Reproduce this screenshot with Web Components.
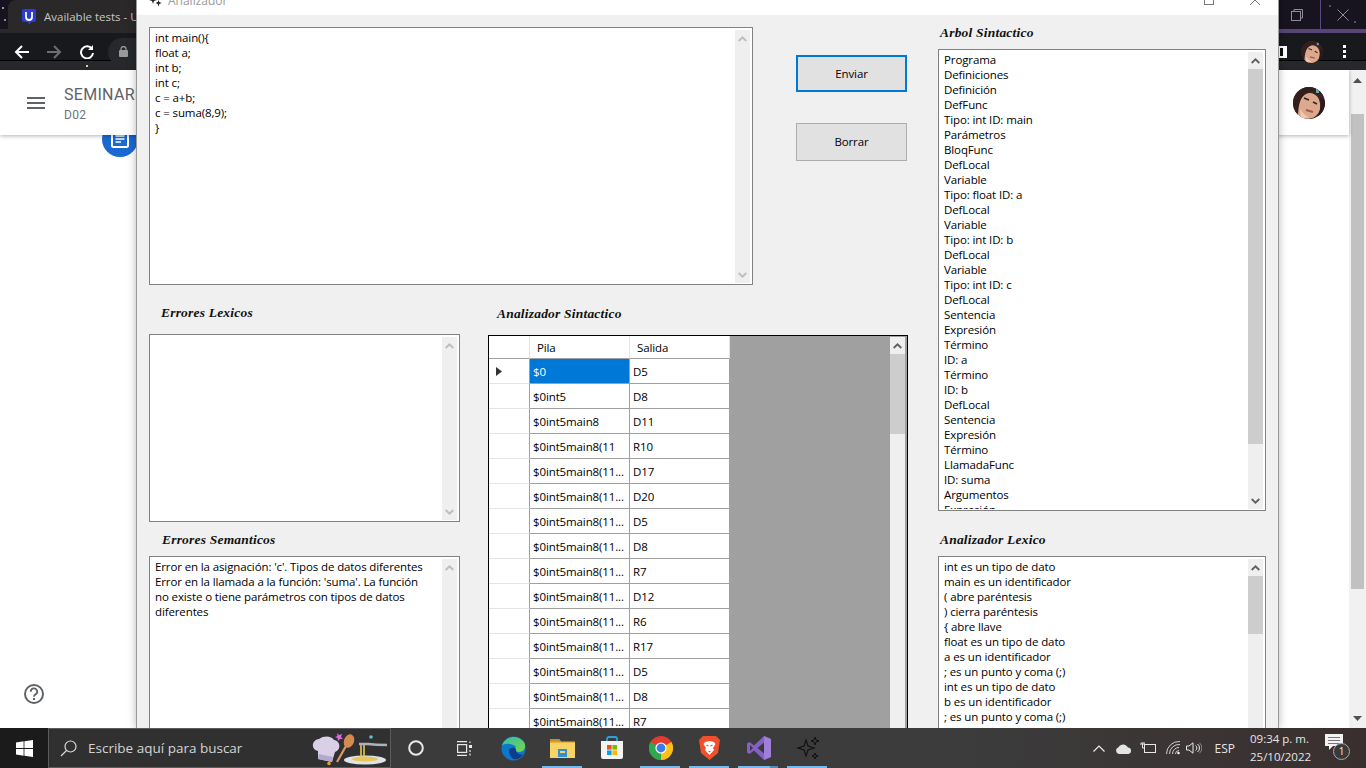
<!DOCTYPE html>
<html lang="es">
<head>
<meta charset="utf-8">
<title>Analizador</title>
<style>
  html, body { margin: 0; height: 100%; overflow: hidden; background: #fff; }
  body { font-family: "Open Sans", "Noto Sans", sans-serif; }
</style>
</head>
<body>
<desktop-screen>
  <browser-window slot="back"></browser-window>
  <form-window slot="front" caption="Analizador">
    <analizador-form></analizador-form>
  </form-window>
  <win-taskbar slot="bar"></win-taskbar>
</desktop-screen>

<script>
const UI_FONT = '"Open Sans", "Noto Sans", sans-serif';

class DesktopScreen extends HTMLElement {
  constructor() {
    super();
    this.attachShadow({ mode: 'open' });
    this.shadowRoot.innerHTML = `
      <style>
        :host { display: flex; flex-direction: column; width: 1366px; height: 768px; overflow: hidden; }
        .desk { position: relative; height: 728px; overflow: hidden; }
        ::slotted([slot=back]) { height: 728px; }
        ::slotted([slot=front]) { position: absolute; left: 137px; top: -15px; width: 1141px; height: 743px; }
        ::slotted([slot=bar]) { height: 40px; }
      </style>
      <div class="desk"><slot name="back"></slot><slot name="front"></slot></div>
      <slot name="bar"></slot>`;
  }
}

class BrowserWindow extends HTMLElement {
  constructor() {
    super();
    this.attachShadow({ mode: 'open' });
    const avatar = (id, size) => `
      <svg width="${size}" height="${size}" viewBox="0 0 32 32" style="display:block">
        <defs><clipPath id="${id}"><circle cx="16" cy="16" r="16"/></clipPath></defs>
        <g clip-path="url(#${id})">
          <rect width="32" height="32" fill="#3a2320"/>
          <path d="M4 32 C3 22 6 8 16 6 C25 6 28 14 27 22 C26 28 20 32 14 32 Z" fill="#dca88e"/>
          <path d="M0 0 H32 V11 C28 6 22 3 15 5 C8 8 5 16 5 32 H0 Z" fill="#33201c"/>
          <path d="M27 10 L32 14 V32 H23 C27 26 29 18 27 10 Z" fill="#2c1a18"/>
          <path d="M11 11 L16 13 M20 15 L24 17" stroke="#3a2320" stroke-width="1.6"/>
          <path d="M13 23 L20 25" stroke="#a8554f" stroke-width="2"/>
          <path d="M7 22 C10 26 12 29 16 30 L8 32 Z" fill="#f0c9b2"/>
          <rect x="23" y="2" width="3" height="4" fill="#6aa7a8"/>
        </g>
      </svg>`;
    this.shadowRoot.innerHTML = `
      <style>
        :host { display: flex; flex-direction: column; background: #fff; font-family: ${UI_FONT}; isolation: isolate; }
        .tabs { height: 29px; display: flex; background:
            radial-gradient(1px 1px at 3px 8px, #9a93b8 99%, transparent),
            radial-gradient(1px 1px at 5px 20px, #8a86a0 99%, transparent),
            radial-gradient(1px 1px at 1330px 6px, #55506a 99%, transparent),
            radial-gradient(1px 1px at 1355px 22px, #55506a 99%, transparent),
            #17131f; }
        .tab { margin-left: 8px; width: 129px; flex: none; background: #2a2829; border-radius: 8px 0 0 0; display: flex; align-items: center; padding-left: 14px; box-sizing: border-box; gap: 8px; color: #c6c6c6; font-size: 11.5px; height: 33px; white-space: nowrap; overflow: hidden; }
        .tab svg { flex: none; }
        .caps { margin-left: auto; display: flex; align-items: center; width: 92px; height: 29px; }
        .caps svg { display: block; }
        .caps .a { width: 46px; display: flex; justify-content: center; }
        .caps .b { width: 46px; display: flex; justify-content: center; border-left: 1px solid #5b4a80; height: 29px; align-items: center; }
        .band { height: 4px; background: linear-gradient(90deg, #2a2829 0, #2a2829 40%, #57457a 90%); }
        .tools { height: 37px; background:
            radial-gradient(1.5px 1.5px at 87px 33px, #d8d0a8 99%, transparent),
            linear-gradient(#17191d 0, #17191d 27px, #000 27px, #000 28px, #26282b 28px);
          display: flex; align-items: center; }
        .tools .nav { display: flex; align-items: center; gap: 18px; margin-left: 14px; }
        .omni { margin-left: 14px; height: 28px; width: 1000px; background: #26282b; border-radius: 14px 0 0 14px; display: flex; align-items: center; padding-left: 11px; box-sizing: border-box; }
        .end { margin-left: auto; display: flex; align-items: center; gap: 20px; margin-right: 20px; }
        .dots { display: flex; flex-direction: column; gap: 2px; }
        .dots i { width: 3px; height: 3px; background: #fff; display: block; }
        .main { flex: 1; display: flex; min-height: 0; }
        .page { flex: 1; display: flex; flex-direction: column; position: relative; min-width: 0; }
        .appbar { height: 65px; background: #fff; box-shadow: 0 1px 4px rgba(0,0,0,.3); display: flex; align-items: center; position: relative; z-index: 2; }
        .burger { margin-left: 27px; width: 18px; display: flex; flex-direction: column; gap: 3px; }
        .burger i { display: block; height: 2px; background: #5f6368; }
        .titles { margin-left: 19px; padding-top: 3px; font-family: Roboto, sans-serif; color: #5f6368; }
        .titles b { display: block; font-weight: 400; font-size: 16px; line-height: 20px; letter-spacing: .3px; }
        .titles span { display: block; font-size: 12px; line-height: 16px; margin-top: 2px; letter-spacing: .3px; color: #6f7377; }
        .me { margin-left: auto; margin-right: 24px; height: 32px; }
        .fab { position: absolute; left: 102px; top: 51px; width: 36px; height: 36px; border-radius: 50%; background: #1a68d1; z-index: 1; display: flex; align-items: center; justify-content: center; }
        .body { flex: 1; display: flex; flex-direction: column; justify-content: flex-end; padding: 0 0 24px 24px; }
        .sb { width: 17px; background: #f1f1f1; display: flex; flex-direction: column; align-items: center; }
        .sb .up { height: 44px; display: flex; align-items: center; justify-content: center; flex: none; box-sizing: border-box; padding-bottom: 24px; }
        .sb .thumb { width: 13px; height: 475px; background: #c1c1c1; flex: none; }
        .sb .dn { margin-top: auto; height: 20px; display: flex; align-items: center; justify-content: center; }
      </style>
      <div class="tabs">
        <div class="tab">
          <svg width="14" height="16" viewBox="0 0 14 16"><path d="M2 0 H12 A2 2 0 0 1 14 2 V11 A2 2 0 0 1 12 13 H9 L7 16 L6 13 H2 A2 2 0 0 1 0 11 V2 A2 2 0 0 1 2 0 Z" fill="#2a3bd6"/><path d="M4 3 V8 A3 3 0 0 0 10 8 V3" fill="none" stroke="#fff" stroke-width="1.8"/></svg>
          <span>Available tests - U</span>
        </div>
        <div class="caps">
          <div class="a"><svg width="12" height="12" viewBox="0 0 12 12" fill="none" stroke="#8f8b98"><rect x=".5" y="2.5" width="9" height="9"/><path d="M3 2.5 V.5 H11.5 V9 H9.5"/></svg></div>
          <div class="b"><svg width="12" height="12" viewBox="0 0 12 12" stroke="#8f8b98" stroke-width="1"><path d="M.5 .5 L11.5 11.5 M11.5 .5 L.5 11.5"/></svg></div>
        </div>
      </div>
      <div class="band"></div>
      <div class="tools">
        <div class="nav">
          <svg width="15" height="14" viewBox="0 0 15 14" fill="none" stroke="#fff" stroke-width="2"><path d="M15 7 H2 M8 1 L2 7 L8 13"/></svg>
          <svg width="15" height="14" viewBox="0 0 15 14" fill="none" stroke="#6e6e6e" stroke-width="2"><path d="M0 7 H13 M7 1 L13 7 L7 13"/></svg>
          <svg width="14" height="14" viewBox="0 0 14 14" fill="none" stroke="#fff" stroke-width="2"><path d="M12 4 A6 6 0 1 0 13 8"/><path d="M13 0 V5 H8 Z" fill="#fff" stroke="none"/></svg>
        </div>
        <div class="omni">
          <svg width="9" height="11" viewBox="0 0 9 11"><rect y="4" width="9" height="7" rx="1" fill="#9a9a9a"/><path d="M2 4 V3 A2.5 2.5 0 0 1 7 3 V4" fill="none" stroke="#9a9a9a" stroke-width="1.3"/></svg>
        </div>
        <div class="end">
          <svg width="9" height="12" viewBox="0 0 9 12" style="margin-right:-6px"><rect width="9" height="12" fill="#fff"/><rect x="2" y="2" width="3" height="8" fill="#111"/></svg>
          ${avatar('av1', 22)}
          <div class="dots"><i></i><i></i><i></i></div>
        </div>
      </div>
      <div class="main">
        <div class="page">
          <div class="appbar">
            <div class="burger"><i></i><i></i><i></i></div>
            <div class="titles"><b>SEMINARIO</b><span>D02</span></div>
            <div class="me">${avatar('av2', 32)}</div>
          </div>
          <div class="fab"><svg width="18" height="18" viewBox="0 0 18 18"><rect x="1" y="1" width="16" height="16" rx="1.5" fill="none" stroke="#fff" stroke-width="2"/><path d="M4.5 6 H13.5 M4.5 9 H13.5 M4.5 12 H10" stroke="#fff" stroke-width="1.5"/></svg></div>
          <div class="body">
            <svg width="20" height="20" viewBox="0 0 20 20"><circle cx="10" cy="10" r="9" fill="none" stroke="#5f6368" stroke-width="2"/><path d="M6.8 7.8 A3.2 3.2 0 1 1 11.5 10.4 C10.3 11 10 11.6 10 12.8" fill="none" stroke="#5f6368" stroke-width="1.8"/><rect x="9" y="14" width="2" height="2" fill="#5f6368"/></svg>
          </div>
        </div>
        <div class="sb">
          <div class="up"><svg width="9" height="5" viewBox="0 0 9 5"><path d="M4.5 0 L9 5 H0 Z" fill="#505050"/></svg></div>
          <div class="thumb"></div>
          <div class="dn"><svg width="9" height="5" viewBox="0 0 9 5"><path d="M0 0 H9 L4.5 5 Z" fill="#505050"/></svg></div>
        </div>
      </div>`;
  }
}

class FormWindow extends HTMLElement {
  constructor() {
    super();
    this.attachShadow({ mode: 'open' });
    this.shadowRoot.innerHTML = `
      <style>
        :host { display: flex; flex-direction: column; background: #f0f0f0; box-shadow: 0 0 9px rgba(0,0,0,.35); outline: 1px solid #9a9a9a; font-family: ${UI_FONT}; }
        .title { flex: none; height: 30px; background: #fff; display: flex; align-items: center; color: #9b9b9b; font-size: 12px; padding-left: 12px; gap: 6px; }
        .btns { margin-left: auto; display: flex; }
        .btns div { width: 46px; display: flex; justify-content: center; }
        .client { flex: 1; min-height: 0; overflow: hidden; }
      </style>
      <div class="title">
        <svg width="13" height="13" viewBox="0 0 13 13"><path d="M4 2 L5 5 L8 6 L5 7 L4 10 L3 7 L0 6 L3 5 Z M9.5 6 L10.3 8 L12.5 9 L10.3 10 L9.5 12.5 L8.7 10 L6.5 9 L8.7 8 Z" fill="#222"/></svg>
        <span id="cap"></span>
        <div class="btns">
          <div><svg width="10" height="10" viewBox="0 0 10 10"><rect x=".5" y=".5" width="9" height="9" fill="none" stroke="#777"/></svg></div>
          <div><svg width="10" height="10" viewBox="0 0 10 10"><path d="M0 0 L10 10 M10 0 L0 10" stroke="#777"/></svg></div>
        </div>
      </div>
      <div class="client"><slot></slot></div>`;
    this.shadowRoot.getElementById('cap').textContent = this.getAttribute('caption');
  }
}

class WinScrollbar extends HTMLElement {
  constructor() {
    super();
    this.attachShadow({ mode: 'open' });
    const off = this.hasAttribute('disabled');
    const color = off ? '#bdbdbd' : '#606060';
    const top = this.getAttribute('thumb-top') || 0;
    const h = this.getAttribute('thumb-height') || 0;
    this.shadowRoot.innerHTML = `
      <style>
        :host { display: flex; flex-direction: column; flex: none; width: 15px; background: #efefef; }
        .arrow { flex: none; height: 17px; display: flex; align-items: center; justify-content: center; }
        .track { flex: 1; min-height: 0; }
        .thumb { background: #cdcdcd; }
      </style>
      <div class="arrow"><svg width="9" height="6" viewBox="0 0 9 6"><path d="M.7 5 L4.5 1.3 L8.3 5" fill="none" stroke="${color}" stroke-width="1.8"/></svg></div>
      <div class="track">${off ? '' : `<div class="thumb" style="margin-top:${top}px;height:${h}px"></div>`}</div>
      <div class="arrow"><svg width="9" height="6" viewBox="0 0 9 6"><path d="M.7 1 L4.5 4.7 L8.3 1" fill="none" stroke="${color}" stroke-width="1.8"/></svg></div>`;
  }
}

class TextBox extends HTMLElement {
  constructor() {
    super();
    this.attachShadow({ mode: 'open' });
    const bar = this.hasAttribute('thumb-height')
      ? `<win-scrollbar thumb-top="${this.getAttribute('thumb-top')}" thumb-height="${this.getAttribute('thumb-height')}"></win-scrollbar>`
      : `<win-scrollbar disabled></win-scrollbar>`;
    this.shadowRoot.innerHTML = `
      <style>
        :host { display: flex; box-sizing: border-box; background: #fff; border: 1px solid #828282; padding: 2px 2px 1px 0; font-family: ${UI_FONT}; font-size: 11.5px; letter-spacing: -.12px; line-height: 15px; color: #000; }
        .text { flex: 1; min-width: 0; padding-left: 5px; overflow: hidden; white-space: pre-wrap; }
      </style>
      <div class="text"><slot></slot></div>${bar}`;
  }
}

class FormButton extends HTMLElement {
  constructor() {
    super();
    this.attachShadow({ mode: 'open' });
    this.shadowRoot.innerHTML = `
      <style>
        :host { display: flex; align-items: center; justify-content: center; box-sizing: border-box; width: 111px; padding-bottom: 2px; background: #e1e1e1; border: 1px solid #adadad; font-family: ${UI_FONT}; font-size: 11.5px; letter-spacing: -.12px; color: #000; }
        :host([focused]) { border: 2px solid #0078d7; padding-bottom: 0; }
      </style><slot></slot>`;
  }
}

class FormLabel extends HTMLElement {
  constructor() {
    super();
    this.attachShadow({ mode: 'open' });
    this.shadowRoot.innerHTML = `
      <style>
        :host { display: block; height: 16px; line-height: 16px; font-family: "Liberation Serif", serif; font-style: italic; font-weight: 700; font-size: 13.5px; letter-spacing: .2px; color: #111; white-space: nowrap; }
      </style><slot></slot>`;
  }
}

class DataGrid extends HTMLElement {
  constructor() {
    super();
    this.attachShadow({ mode: 'open' });
    const long = '$0int5main8(11...';
    const rows = [['$0','D5'],['$0int5','D8'],['$0int5main8','D11'],['$0int5main8(11','R10'],
      [long,'D17'],[long,'D20'],[long,'D5'],[long,'D8'],[long,'R7'],[long,'D12'],[long,'R6'],
      [long,'R17'],[long,'D5'],[long,'D8'],[long,'R7']];
    const body = rows.map((r, i) => `
      <div class="row">
        <div class="hd">${i === 0 ? '<svg width="6" height="9" viewBox="0 0 6 9"><path d="M0 0 L6 4.5 L0 9 Z" fill="#333"/></svg>' : ''}</div>
        <div class="c ${i === 0 ? 'sel' : ''}">${r[0]}</div>
        <div class="c">${r[1]}</div>
      </div>`).join('');
    this.shadowRoot.innerHTML = `
      <style>
        :host { display: flex; box-sizing: border-box; border: 1px solid #000; background: #a0a0a0; font-family: ${UI_FONT}; font-size: 11.5px; letter-spacing: -.12px; color: #000; overflow: hidden; }
        .cells { flex: 1; min-width: 0; }
        .row { display: flex; height: 25px; line-height: 26px; box-sizing: border-box; width: 241px; }
        .hd { width: 41px; box-sizing: border-box; background: #fff; border-bottom: 1px solid #e4e4e4; border-right: 1px solid #a0a0a0; display: flex; align-items: center; padding-left: 7px; }
        .c { width: 100px; box-sizing: border-box; background: #fff; border-right: 1px solid #a0a0a0; border-bottom: 1px solid #a0a0a0; padding-left: 3px; white-space: nowrap; overflow: hidden; }
        .sel { background: #0078d7; color: #fff; }
        .head { height: 23px; line-height: 24px; }
        .head .hd, .head .c { border-color: #a0a0a0; border-right-color: #e4e4e4; }
        .head .c { padding-left: 7px; }
        win-scrollbar { width: 15px; margin: 1px 2px 0 1px; }
      </style>
      <div class="cells">
        <div class="row head"><div class="hd"></div><div class="c">Pila</div><div class="c">Salida</div></div>
        ${body}
      </div>
      <win-scrollbar thumb-top="0" thumb-height="80"></win-scrollbar>`;
  }
}

class AnalizadorForm extends HTMLElement {
  constructor() {
    super();
    this.attachShadow({ mode: 'open' });
    this.shadowRoot.innerHTML = `
      <style>
        :host { display: flex; padding: 12px 0 0 12px; gap: 30px; }
        .left { width: 759px; flex: none; }
        .top { display: flex; height: 258px; }
        .editor { width: 604px; }
        .buttons { margin-left: 43px; display: flex; flex-direction: column; padding-top: 28px; gap: 31px; }
        .buttons form-button:first-child { height: 37px; }
        .buttons form-button:last-child { height: 38px; }
        .bottom { display: flex; gap: 28px; }
        .c1 { width: 311px; flex: none; }
        .c2 { width: 420px; flex: none; }
        .lab-lex { margin: 20px 0 13px 12px; }
        .lab-sem { margin: 10px 0 8px 13px; }
        .lab-sin { margin: 21px 0 13px 9px; }
        .lex { height: 188px; }
        .sem { height: 210px; }
        .grid { height: 410px; }
        .right { width: 328px; flex: none; }
        .lab-arb { margin: -2px 0 8px 2px; }
        .lab-lx { margin: 21px 0 8px 2px; }
        .arbol { height: 462px; }
        .lexico { height: 210px; }
      </style>
      <div class="left">
        <div class="top">
          <text-box class="editor">int main(){
float a;
int b;
int c;
c = a+b;
c = suma(8,9);
}</text-box>
          <div class="buttons">
            <form-button focused>Enviar</form-button>
            <form-button>Borrar</form-button>
          </div>
        </div>
        <div class="bottom">
          <div class="c1">
            <form-label class="lab-lex">Errores Lexicos</form-label>
            <text-box class="lex"></text-box>
            <form-label class="lab-sem">Errores Semanticos</form-label>
            <text-box class="sem">Error en la asignación: 'c'. Tipos de datos diferentes
Error en la llamada a la función: 'suma'. La función
no existe o tiene parámetros con tipos de datos
diferentes</text-box>
          </div>
          <div class="c2">
            <form-label class="lab-sin">Analizador Sintactico</form-label>
            <data-grid class="grid"></data-grid>
          </div>
        </div>
      </div>
      <div class="right">
        <form-label class="lab-arb">Arbol Sintactico</form-label>
        <text-box class="arbol" thumb-top="0" thumb-height="375">Programa
Definiciones
Definición
DefFunc
Tipo: int ID: main
Parámetros
BloqFunc
DefLocal
Variable
Tipo: float ID: a
DefLocal
Variable
Tipo: int ID: b
DefLocal
Variable
Tipo: int ID: c
DefLocal
Sentencia
Expresión
Término
ID: a
Término
ID: b
DefLocal
Sentencia
Expresión
Término
LlamadaFunc
ID: suma
Argumentos
Expresión</text-box>
        <form-label class="lab-lx">Analizador Lexico</form-label>
        <text-box class="lexico" thumb-top="0" thumb-height="58">int es un tipo de dato
main es un identificador
( abre paréntesis
) cierra paréntesis
{ abre llave
float es un tipo de dato
a es un identificador
; es un punto y coma (;)
int es un tipo de dato
b es un identificador
; es un punto y coma (;)
int es un tipo de dato</text-box>
      </div>`;
  }
}

class WinTaskbar extends HTMLElement {
  constructor() {
    super();
    this.attachShadow({ mode: 'open' });
    const slot = (svg, on, extra) => `<div class="app${on ? ' on' : ''}${extra ? ' ' + extra : ''}">${svg}</div>`;
    this.shadowRoot.innerHTML = `
      <style>
        :host { display: flex; align-items: stretch; background: linear-gradient(90deg, #3a3a3a 0, #3c3c3c 70%, #3a2f2f 100%); font-family: ${UI_FONT}; color: #e6e6e6; }
        .start { width: 48px; background: #1b1b1b; display: flex; align-items: center; justify-content: center; flex: none; }
        .search { width: 343px; box-sizing: border-box; background: #303030; border: 1px solid #5c5c5c; display: flex; align-items: center; padding-left: 11px; flex: none; color: #d4d4d4; font-size: 13.5px; white-space: nowrap; }
        .search .label { margin-left: 11px; }
        .search .art { margin-left: auto; margin-right: 2px; }
        .apps { display: flex; }
        .app { width: 49px; display: flex; align-items: center; justify-content: center; position: relative; box-sizing: border-box; }
        .app.on::after { content: ""; position: absolute; left: 4px; right: 5px; bottom: 0; height: 2px; background: #76b9ed; }
        .app.multi::after { background: linear-gradient(90deg, #76b9ed 79%, #4f8cb8 79%); }
        .tray { margin-left: auto; display: flex; align-items: center; }
        .tray > * { flex: none; }
        .esp { font-size: 12px; margin-left: 13px; }
        .clock { font-size: 11.5px; line-height: 18px; margin-left: 15px; width: 70px; }
        .note { position: relative; width: 36px; height: 30px; margin-right: 6px; margin-left: 4px; }
        .badge { position: absolute; left: 9px; top: 10px; width: 15px; height: 15px; border-radius: 50%; border: 1px solid #aaa; background: #3a3a3a; font-size: 10px; line-height: 15px; text-align: center; color: #eee; }
      </style>
      <div class="start"><svg width="17" height="17" viewBox="0 0 17 17" fill="#fff"><path d="M0 2.4 L7.6 1.3 V8 H0 Z M8.4 1.2 L17 0 V8 H8.4 Z M0 9 H7.6 V15.7 L0 14.6 Z M8.4 9 H17 V17 L8.4 15.8 Z"/></svg></div>
      <div class="search">
        <svg width="17" height="17" viewBox="0 0 17 17" fill="none" stroke="#d8d8d8" stroke-width="1.2"><circle cx="10.5" cy="6.5" r="5.5"/><path d="M6.5 10.5 L1 16"/></svg>
        <span class="label">Escribe aquí para buscar</span>
        <svg class="art" width="76" height="36" viewBox="0 0 76 36">
          <path d="M6 29 L6 21 C-1 20 -1 10 7 9 C12 5 20 6 22 10 C29 11 29 20 23 22 L20 32 Z" fill="#d9cfe6"/>
          <path d="M6 29 L20 32 L21 27 L7 24 Z" fill="#b6a8cc"/>
          <path d="M25 3 L27 5 L30 4 L29 7 L31 9 L28 9 L26 11 L25.5 8 L23 7 L25.5 6 Z" fill="#d66be0"/>
          <circle cx="17" cy="33.5" r="1.8" fill="#e8a11c"/>
          <path d="M25 32 L34 16" stroke="#d99a66" stroke-width="2.2"/>
          <ellipse cx="37" cy="11" rx="5" ry="7" fill="#d58a54" transform="rotate(20 37 11)"/>
          <ellipse cx="53" cy="30" rx="21" ry="4.5" fill="#dfe2ea"/>
          <ellipse cx="53" cy="29" rx="13" ry="2.6" fill="#e6c85a"/>
          <path d="M49 27 V13 M52 27 V13" stroke="#e6c85a" stroke-width="1.6"/>
          <path d="M47 14 H56 C64 15 69 15 75 15" stroke="#aeb1bb" stroke-width="2.6" fill="none"/>
          <circle cx="59" cy="7" r="1.8" fill="#59c2da"/>
        </svg>
      </div>
      <div class="apps">
        ${slot('<svg width="18" height="18" viewBox="0 0 18 18"><circle cx="9" cy="9" r="6.8" fill="none" stroke="#e8e8e8" stroke-width="2"/></svg>')}
        ${slot('<svg width="17" height="15" viewBox="0 0 17 15" fill="none" stroke="#e8e8e8" stroke-width="1.2"><path d="M1 .6 H11 M1 14.4 H11"/><rect x="1.6" y="3.6" width="9" height="7.8"/><path d="M14 .6 V2 M14 12.5 V14.4"/><rect x="13" y="4" width="3" height="3" fill="#e8e8e8" stroke="none"/><path d="M14 9 V11"/></svg>')}
        ${slot(`<svg width="25" height="25" viewBox="0 0 25 25"><defs><linearGradient id="eg" x1="0" y1="0" x2="1" y2="1"><stop offset="0" stop-color="#2fc1a8"/><stop offset="1" stop-color="#7bd24a"/></linearGradient></defs><circle cx="12.5" cy="12.5" r="12" fill="#0e78c8"/><path d="M1 10 C3 1 16 -3 23 6 C26 11 23 16 18 16 C14 16 13 13 15 11 C11 7 3 7 1 10 Z" fill="url(#eg)"/><path d="M8 14 C10 10 16 11 15 15 C17 19 21 19 22 18 C18 26 8 25 8 14 Z" fill="#0b3f8c"/></svg>`)}
        ${slot('<svg width="25" height="21" viewBox="0 0 25 21"><path d="M0 1 H9 L11 3.5 H25 V20 H0 Z" fill="#e8b33f"/><path d="M0 1 H9 L11 3.5 H0 Z" fill="#c48e22"/><rect y="5" width="25" height="15" fill="#f7d466"/><path d="M8 11 H17 V15 H15 V13 H10 V15 H8 Z M8 15 H17 V19 H8 Z" fill="#2f8fd8"/></svg>', true)}
        ${slot('<svg width="24" height="24" viewBox="0 0 24 24"><path d="M7 6 V3 A2 2 0 0 1 9 1 H15 A2 2 0 0 1 17 3 V6" fill="none" stroke="#29a3e0" stroke-width="1.8"/><path d="M1 5 H23 V21 A2 2 0 0 1 21 23 H3 A2 2 0 0 1 1 21 Z" fill="#f4f4f4"/><rect x="7" y="9" width="4.6" height="4.6" fill="#f25022"/><rect x="12.4" y="9" width="4.6" height="4.6" fill="#7fba00"/><rect x="7" y="14.4" width="4.6" height="4.6" fill="#00a4ef"/><rect x="12.4" y="14.4" width="4.6" height="4.6" fill="#ffb900"/></svg>')}
        ${slot('<svg width="24" height="24" viewBox="0 0 24 24"><circle cx="12" cy="12" r="12" fill="#e33b2e"/><path d="M12 12 L22.4 6 A12 12 0 0 1 12 24 Z" fill="#fbc116"/><path d="M12 12 L12 24 A12 12 0 0 1 1.6 6 Z" fill="#2da94f"/><circle cx="12" cy="12" r="5.6" fill="#fff"/><circle cx="12" cy="12" r="4.4" fill="#3b7de8"/></svg>', true)}
        ${slot('<svg width="21" height="24" viewBox="0 0 21 24"><path d="M4 0 H17 L21 4 L19 17 L10.5 24 L2 17 L0 4 Z" fill="#f1502c"/><path d="M6 6 L10.5 5 L15 6 L16.5 8 L14 12 L15 14 L10.5 19 L6 14 L7 12 L4.5 8 Z" fill="#fff"/><path d="M7.5 9 L9.5 10 M13.5 9 L11.5 10" stroke="#f1502c" stroke-width="1.3"/><path d="M9 15 H12 L10.5 16.5 Z" fill="#f1502c"/></svg>', true)}
        ${slot('<svg width="24" height="24" viewBox="0 0 24 24"><path d="M17 0 L24 3 V21 L17 24 L7 14.5 L2.5 18 L0 16.5 V7.5 L2.5 6 L7 9.5 Z" fill="#8661c5"/><path d="M17 6.5 L10.5 12 L17 17.5 Z" fill="#3a3a3a"/><path d="M3 9 L6 12 L3 15 Z" fill="#3a3a3a"/><path d="M17 0 L24 3 V21 L17 24 Z" fill="#a98be0" opacity=".7"/></svg>', true, 'multi')}
        ${slot('<svg width="24" height="24" viewBox="0 0 24 24" fill="none" stroke="#111" stroke-width="1.2"><path d="M10 4 L12 10 L18 12 L12 14 L10 20 L8 14 L2 12 L8 10 Z"/><path d="M19 1 L20 4 L23 5 L20 6 L19 9 L18 6 L15 5 L18 4 Z M19 17 L19.8 19.2 L22 20 L19.8 20.8 L19 23 L18.2 20.8 L16 20 L18.2 19.2 Z" stroke-width="1"/></svg>', true)}
      </div>
      <div class="tray">
        <svg width="12" height="7" viewBox="0 0 12 7" fill="none" stroke="#eee" stroke-width="1.2"><path d="M.5 6.5 L6 1 L11.5 6.5"/></svg>
        <svg style="margin-left:10px" width="17" height="11" viewBox="0 0 17 11"><path d="M4 11 A3.5 3.5 0 0 1 3.5 4.2 A5.5 5.5 0 0 1 13 4.5 A3.3 3.3 0 0 1 13.5 11 Z" fill="#e4e4e4"/></svg>
        <svg style="margin-left:8px" width="16" height="12" viewBox="0 0 16 12" fill="none" stroke="#e8e8e8"><rect x="4.5" y="2.5" width="11" height="8"/><path d="M0 2 H5 M2 0 V2 M4 0 V2 M2.5 2 V6 H5"/></svg>
        <svg style="margin-left:10px" width="15" height="14" viewBox="0 0 15 14" fill="none" stroke="#cfcfcf"><path d="M.5 13 A12.5 12.5 0 0 1 14 .5 M3.5 13 A9.5 9.5 0 0 1 14 3.5 M6.5 13 A6.5 6.5 0 0 1 13 6.5 M9.5 13 A3.5 3.5 0 0 1 13 9.5"/><circle cx="12.5" cy="12" r="1.3" fill="#eee" stroke="none"/></svg>
        <svg style="margin-left:5px" width="16" height="12" viewBox="0 0 16 12" fill="none" stroke="#e8e8e8"><path d="M.5 4 H3 L7 .8 V11.2 L3 8 H.5 Z"/><path d="M9.5 3.5 A3 3 0 0 1 9.5 8.5 M11.5 2 A5 5 0 0 1 11.5 10" /><path d="M13.5 .8 A7 7 0 0 1 13.5 11.2" stroke="#888"/></svg>
        <span class="esp">ESP</span>
        <div class="clock">09:34 p. m.<br>25/10/2022</div>
        <div class="note">
          <svg width="18" height="16" viewBox="0 0 18 16" style="margin-left:1px;margin-top:1px"><path d="M0 0 H18 V12 H8 L4 16 V12 H0 Z" fill="#f2f2f2"/><path d="M3 3.5 H15 M3 6.5 H15 M3 9.5 H15" stroke="#777"/></svg>
          <div class="badge">1</div>
        </div>
      </div>`;
  }
}

customElements.define('win-scrollbar', WinScrollbar);
customElements.define('text-box', TextBox);
customElements.define('form-button', FormButton);
customElements.define('form-label', FormLabel);
customElements.define('data-grid', DataGrid);
customElements.define('analizador-form', AnalizadorForm);
customElements.define('form-window', FormWindow);
customElements.define('browser-window', BrowserWindow);
customElements.define('win-taskbar', WinTaskbar);
customElements.define('desktop-screen', DesktopScreen);
</script>
</body>
</html>
